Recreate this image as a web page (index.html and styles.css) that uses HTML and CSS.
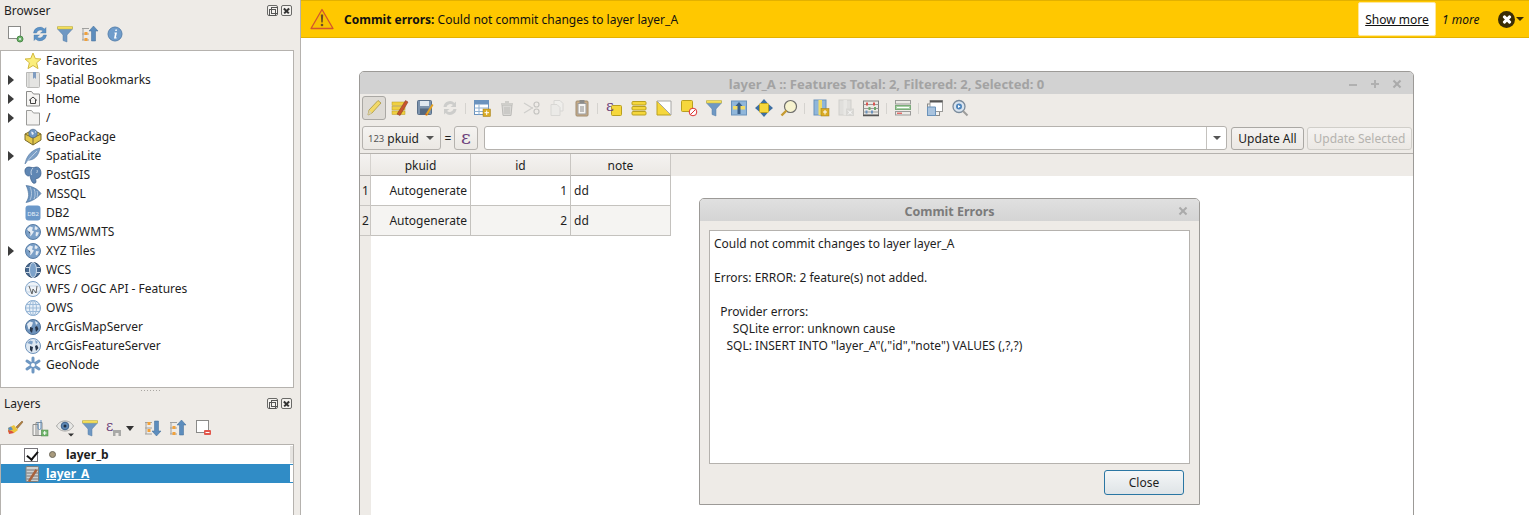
FILE: index.html
```html
<!DOCTYPE html>
<html lang="en">
<head>
<meta charset="utf-8">
<title>QGIS commit errors</title>
<link rel="stylesheet" href="styles.css">
</head>
<body>
<svg class="defs" width="0" height="0" aria-hidden="true">
  <defs>
    <symbol id="star" viewBox="0 0 18 18"><polygon points="9,1 11.3,6.6 17,7 12.6,10.8 14,16.6 9,13.5 4,16.6 5.4,10.8 1,7 6.7,6.6" fill="#fbee7c" stroke="#d2b93f"/></symbol>
    <symbol id="book" viewBox="0 0 18 18"><path d="M2.500 1.500h12a1 1 0 0 1 1 1v13a1 1 0 0 1-1 1H4a2 2 0 0 1-1.500-1z" fill="#e4e4e2" stroke="#b9b9b7"/><path d="M5 2v14" stroke="#c7c7c5"/><path d="M9 1h3v7l-1.500-1.500L9 8z" fill="#7f9cc0"/></symbol>
    <symbol id="home" viewBox="0 0 18 18"><path d="M2.500 1.500h5l2 2.500h6v12h-13z" fill="#f6f5f3" stroke="#8b8b89"/><path d="M5 10.500l4-3.500 4 3.500M6.500 9.500v4h5v-4" fill="none" stroke="#444"/></symbol>
    <symbol id="folder" viewBox="0 0 18 18"><path d="M2.500 1.500h5l2 2.500h6v12h-13z" fill="#f3f2f0" stroke="#9b9b99"/></symbol>
    <symbol id="gpkg" viewBox="0 0 18 18"><path d="M1 6l8-4 8 4v6l-8 5-8-5z" fill="#e3c84d" stroke="#7a6a2b"/><path d="M1 6l8 4 8-4M9 10v7" fill="none" stroke="#7a6a2b"/><circle cx="9" cy="5.500" r="4.300" fill="#6f96c2" stroke="#45648a" stroke-width=".6"/><path d="M7 3.500l2 .5 1 2-2 1zM11 3l1.500 1-1 1z" fill="#e8eef5"/></symbol>
    <symbol id="feather" viewBox="0 0 18 18"><path d="M1 17c1-6 5-14 15-16-1 6-4 11-10 12-2 .4-3 1-5 4z" fill="#7c9fc6" stroke="#52769f" stroke-width=".6"/><path d="M3 15c3-4 6-7 10-11" stroke="#dfe8f2" fill="none" stroke-width=".7"/></symbol>
    <symbol id="elephant" viewBox="0 0 18 18"><path d="M5 1c-3 0-4.500 2-4 5 .3 2.500 2 4 3.500 4 1 0 1-1 1.500 0 .6 2.500 1 5 3 7 1.500 .7 3 0 3-1 0-1.500-.5-2.500 0-3.500 2 .3 5-1.500 5-5C17 4 15.500 1 12.500 1c-1.500 0-2 .7-3.500.7C7.500 1.700 6.500 1 5 1z" fill="#5f86b3" stroke="#3c5f8a" stroke-width=".7"/><path d="M9 2c-2 2-2.500 4-1.500 7M13 4c.5 1 .5 2-.5 3" stroke="#dbe5f0" fill="none" stroke-width=".8"/></symbol>
    <symbol id="fin" viewBox="0 0 18 18"><path d="M2 .5c6 .5 12 3.500 15 8-3 4-9 8-15 9 2-3 3-6 2.500-9S3.500 3 2 .5z" fill="#6b93be" stroke="#4b7099" stroke-width=".6"/><path d="M6 2c2 4 2 9 0 13M10 4c1.500 3 1.500 7 0 10M13 6c.8 2 .8 4 0 6" stroke="#d3e0ee" fill="none" stroke-width=".7"/></symbol>
    <symbol id="db2" viewBox="0 0 18 18"><rect x=".5" y=".5" width="15" height="15" rx="3" fill="#6b98c9" transform="translate(1 1)"/><text x="9" y="11.500" text-anchor="middle" class="db2-label">DB2</text></symbol>
    <symbol id="globe" viewBox="0 0 18 18"><circle cx="9" cy="9" r="7.500" fill="#7ba0c8" stroke="#587da6"/><path d="M3 6l3-2.500 3 1-1 3 2 1-2 3-1.500 2-1-3.500zM11 3l3 2-1.500 2-2-.5zM12 9l3 .5-2 4-1.500-1z" fill="#e5ecf4"/><path d="M4 8l2 1 .5 3z" fill="#37506f"/></symbol>
    <symbol id="wcs" viewBox="0 0 18 18"><circle cx="9" cy="9" r="7.500" fill="#46688f" stroke="#2f4b6d"/><path d="M2 6.500h14M1.500 11.500h15" stroke="#cfdcea" stroke-width="1.200"/><ellipse cx="9" cy="9" rx="3.500" ry="7.500" fill="#7da2c9" stroke="#cfdcea"/></symbol>
    <symbol id="wfs" viewBox="0 0 18 18"><circle cx="9" cy="9" r="7.500" fill="#eef3f8" stroke="#7b9fc6"/><path d="M2 6h14M2 12h14" stroke="#c3d4e6"/><path d="M5 6l3 8 1-5 3 4 1-7" fill="none" stroke="#555" stroke-width=".9"/></symbol>
    <symbol id="ows" viewBox="0 0 18 18"><circle cx="9" cy="9" r="7.500" fill="#e8f0f8" stroke="#7ca2ca"/><ellipse cx="9" cy="9" rx="3.500" ry="7.500" fill="none" stroke="#9dbbd9"/><path d="M1.500 9h15M2.500 5.500h13M2.500 12.500h13M9 1.500v15" stroke="#9dbbd9"/></symbol>
    <symbol id="arcmap" viewBox="0 0 18 18"><circle cx="9" cy="9" r="7.500" fill="#6f94bd" stroke="#4f7299"/><path d="M3 6l3-2.500 3 1-1 3-2 3-1.500 1zM11 3l3 2-2 2z" fill="#e5ecf4"/><path d="M6 9l3 1-1 5-2-2zM11 9l2-1 1.500 3-2.500 3z" fill="#27354a"/></symbol>
    <symbol id="arcfeat" viewBox="0 0 18 18"><circle cx="9" cy="9" r="7.500" fill="#dde7f1" stroke="#6f94bd"/><path d="M3 6l3-2.500 3 1-1 3zM11 3l3 2-2 2z" fill="#7da0c6"/><path d="M6 9l3 1-1 5-2-2zM11 9l2-1 1.500 3-2.500 3z" fill="#27354a"/></symbol>
    <symbol id="geonode" viewBox="0 0 18 18"><g stroke="#6e97c2" stroke-width="3" stroke-linecap="round"><path d="M9 2v14M3 5l12 8M15 5L3 13"/></g><circle cx="9" cy="9" r="2" fill="#fff"/></symbol>

    <symbol id="new-conn" viewBox="0 0 18 18"><rect x="2.500" y="1.500" width="12" height="12" fill="#fff" stroke="#8a8a88"/><circle cx="14" cy="14" r="3" fill="#6fb46a" stroke="#4b8a4a"/><circle cx="14" cy="14" r="1" fill="#eef"/></symbol>
    <symbol id="refresh" viewBox="0 0 18 18"><path d="M2.500 8a6.500 6.500 0 0 1 11-4l1.500-1.500V8h-5.500L12 6a4 4 0 0 0-6.500 2z" fill="#5d93c7" stroke="#4373a3" stroke-width=".4"/><path d="M15.500 10a6.500 6.500 0 0 1-11 4L3 15.500V10h5.500L6 12a4 4 0 0 0 6.500-2z" fill="#5d93c7" stroke="#4373a3" stroke-width=".4"/></symbol>
    <symbol id="refresh-off" viewBox="0 0 18 18"><path d="M2.500 8a6.500 6.500 0 0 1 11-4l1.500-1.500V8h-5.500L12 6a4 4 0 0 0-6.500 2z" fill="#cdcdcb"/><path d="M15.500 10a6.500 6.500 0 0 1-11 4L3 15.500V10h5.500L6 12a4 4 0 0 0 6.500-2z" fill="#cdcdcb"/></symbol>
    <symbol id="filter" viewBox="0 0 18 18"><path d="M1.500 2h15v2l-5.500 6v7l-4-1.500V10L1.500 4z" fill="#6f98c3" stroke="#557da7" stroke-width=".5"/><path d="M1.500 1.500h15V4h-15z" fill="#f4df5c" stroke="#c9b53f" stroke-width=".5"/></symbol>
    <symbol id="collapse" viewBox="0 0 18 18"><path d="M1 3.500h7M1 9h7M1 15h7M2 3v12" stroke="#a0a09e" fill="none"/><rect x="3.500" y="7" width="3" height="3" fill="#f2a13a"/><rect x="3.500" y="13" width="3" height="3" fill="#f2a13a"/><path d="M12.500 1l4.500 5h-2.500v10h-4V6H8z" fill="#5d8dbd" stroke="#3f6a96" stroke-width=".5"/></symbol>
    <symbol id="expand" viewBox="0 0 18 18"><path d="M1 3.500h7M1 9h7M1 15h7M2 3v12" stroke="#a0a09e" fill="none"/><rect x="3.500" y="3" width="3" height="3" fill="#f2a13a"/><rect x="3.500" y="10" width="3" height="3" fill="#f2a13a"/><path d="M12.500 17l4.500-5h-2.500V2h-4v10H8z" fill="#5d8dbd" stroke="#3f6a96" stroke-width=".5"/></symbol>
    <symbol id="info" viewBox="0 0 18 18"><circle cx="9" cy="9" r="7" fill="#6f9ccb" stroke="#5882ad"/><path d="M9.500 4.500h1.500l-.3 1.500H9.200zM8.500 7.500H11L9.800 12.500h1l-.3 1H8l1-5H8.300z" fill="#fff"/></symbol>

    <symbol id="style" viewBox="0 0 18 18"><path d="M2 9l6-3 4 5-4 3-6-1z" fill="#ecc53c"/><path d="M2 11l4 1 2 2-5 1z" fill="#d9503f"/><path d="M2 9l3-1.500 2 3-4 1z" fill="#5f8ec0"/><path d="M10 8l6-6 1 1-5.500 6.500z" fill="#b1803f" stroke="#80592a" stroke-width=".5"/></symbol>
    <symbol id="add-group" viewBox="0 0 18 18"><path d="M2 5.500h5v11H2zM5 3.500h6v13H5z" fill="#f3f2f0" stroke="#8b8b89"/><path d="M7 3V9a1.500 1.500 0 0 0 3 0V1" fill="none" stroke="#5d8dbd"/><rect x="10.500" y="11" width="6.500" height="6" fill="#6fb46a" stroke="#4b8a4a" stroke-width=".5"/><path d="M13.700 12v4M12 14h3.500" stroke="#fff"/></symbol>
    <symbol id="eye" viewBox="0 0 18 18"><path d="M.5 7C3 3 6 2 9 2s6 1 8.500 5C15 11 12 12 9 12s-6-1-8.500-5z" fill="#e8e8e6" stroke="#a6a6a4"/><circle cx="9" cy="7" r="3.800" fill="#5e88b5" stroke="#3d618a"/><circle cx="9" cy="7" r="1.500" fill="#1f2f44"/><path d="M12 14.500h6l-3 3z" fill="#333"/></symbol>
    <symbol id="expr-tbl" viewBox="0 0 18 18"><text x="0" y="12" class="eps-small">&#949;</text><path d="M7 11h8v6h-2.500v-3h-3v3H7z" fill="#a9a9a7"/></symbol>
    <symbol id="remove-lyr" viewBox="0 0 18 18"><rect x="2.500" y="1.500" width="12" height="12" fill="#fff" stroke="#8a8a88"/><rect x="10" y="11" width="7" height="5" rx="1" fill="#e2574c"/><path d="M11.500 13.500h4" stroke="#fff"/></symbol>
    <symbol id="edit-lyr" viewBox="0 0 18 18"><rect x="2" y="1.500" width="12.500" height="15" rx="1" fill="#cfd0ce" stroke="#7d7d7b"/><path d="M2.500 5h11.500M2.500 8h11.500M2.500 11h11.500M2.500 14h11.500" stroke="#76777a"/><path d="M4 15.500L11.500 4l2 1.500L6 17z" fill="#a8623c"/></symbol>

    <symbol id="pencil" viewBox="0 0 18 18"><path d="M3 16l1-5L13 1.500 16 4 7 14z" fill="#f2d968" stroke="#a08c35" stroke-width=".7"/><path d="M3 16l1-5 3 3z" fill="#d8d0b0"/></symbol>
    <symbol id="multi-edit" viewBox="0 0 18 18"><rect x="1" y="3" width="13" height="3.500" fill="#f0d040" stroke="#b59a25" stroke-width=".5"/><rect x="1" y="7.500" width="13" height="3.500" fill="#f0d040" stroke="#b59a25" stroke-width=".5"/><rect x="1" y="12" width="13" height="3.500" fill="#f0d040" stroke="#b59a25" stroke-width=".5"/><path d="M6 15L14.500 1.500l2.500 1.500-8 13.500z" fill="#c7552e" stroke="#7d3a1f" stroke-width=".5"/></symbol>
    <symbol id="save-edit" viewBox="0 0 18 18"><rect x="1.500" y="1.500" width="14" height="14" rx="1" fill="#7c93ad" stroke="#5a708a"/><rect x="4" y="2" width="9" height="5" fill="#dfe7ef"/><rect x="4" y="9.500" width="9" height="6" fill="#55687f"/><path d="M9 16L16 5l1.500 1-6.500 11z" fill="#e6a21f"/><path d="M9 16l1-1.500 1.500 1z" fill="#c7452e"/></symbol>
    <symbol id="new-field" viewBox="0 0 18 18"><rect x="1.500" y="1.500" width="14" height="14" fill="#fff" stroke="#6b93be"/><rect x="1.500" y="1.500" width="14" height="4" fill="#6b93be"/><path d="M1.500 9h14M1.500 12.500h14M6 5.500v10" stroke="#8fb0d0"/><rect x="10" y="10" width="7.500" height="7.500" fill="#d9ab25" stroke="#a07d18" stroke-width=".5"/><path d="M13.700 11.500v4.500M11.500 13.700H16" stroke="#fff"/></symbol>
    <symbol id="trash" viewBox="0 0 18 18"><path d="M4 6h10l-1 10.500H5z" fill="#d9d8d5" stroke="#bcbbb8"/><path d="M3 4h12v2H3zM7 2h4v2H7z" fill="#cfceca"/><path d="M7 8v7M9 8v7M11 8v7" stroke="#bcbbb8"/></symbol>
    <symbol id="cut" viewBox="0 0 18 18"><path d="M1 4l9 5.500M1 14l9-5.500" stroke="#cfcecb" stroke-width="1.200"/><circle cx="13.500" cy="5.500" r="2.500" fill="none" stroke="#c5c4c1" stroke-width="1.200"/><circle cx="13.500" cy="12.500" r="2.500" fill="none" stroke="#c5c4c1" stroke-width="1.200"/></symbol>
    <symbol id="copy" viewBox="0 0 18 18"><path d="M6 1.500h6l3 3V12H6z" fill="#efeeeb" stroke="#d8d7d4"/><path d="M3 5.500h6l3 3v8H3z" fill="#ebeae7" stroke="#d8d7d4"/></symbol>
    <symbol id="paste" viewBox="0 0 18 18"><rect x="3" y="2" width="12" height="15" rx="1" fill="#c9ad88" stroke="#a08c70"/><rect x="5" y="4.500" width="8" height="10.500" fill="#f6f5f3" stroke="#999"/><rect x="6.500" y="1" width="5" height="3" fill="#8b8b89"/><path d="M7 8h4M7 10h4M7 12h4" stroke="#888"/></symbol>
    <symbol id="sel-expr" viewBox="0 0 18 18"><rect x="6.500" y="6.500" width="10" height="10" rx="1" fill="#f6d73c" stroke="#b9a021"/><text x="1" y="11.500" class="eps-big">&#949;</text></symbol>
    <symbol id="sel-all" viewBox="0 0 18 18"><rect x="2" y="2.500" width="14" height="3.500" rx="1" fill="#f6d73c" stroke="#b9a021"/><rect x="2" y="7.500" width="14" height="3.500" rx="1" fill="#f6d73c" stroke="#b9a021"/><rect x="2" y="12.500" width="14" height="3.500" rx="1" fill="#f6d73c" stroke="#b9a021"/></symbol>
    <symbol id="sel-inv" viewBox="0 0 18 18"><path d="M2 2v14h14z" fill="#f6d73c" stroke="#b9a021"/><path d="M2 2h14v14z" fill="#fff" stroke="#a6a6a4"/></symbol>
    <symbol id="desel" viewBox="0 0 18 18"><rect x="1.500" y="1.500" width="11" height="11" rx="1" fill="#f6d73c" stroke="#b9a021"/><circle cx="13" cy="13" r="3.800" fill="#fff" stroke="#d33"/><path d="M10.500 15.500l5-5" stroke="#d33"/></symbol>
    <symbol id="move-top" viewBox="0 0 18 18"><rect x="1.500" y="2" width="15" height="14" fill="#8fb6da" stroke="#6a93bb"/><rect x="3" y="7" width="12" height="3.500" fill="#f1dc66"/><path d="M9 3l3.500 4h-2v8h-3V7h-2z" fill="#3a5f88"/></symbol>
    <symbol id="pan" viewBox="0 0 18 18"><path d="M9 0l3.500 4h-7zM9 18l-3.500-4h7zM0 9l4-3.500v7zM18 9l-4 3.500v-7z" fill="#3e6fa3"/><rect x="4.500" y="4.500" width="9" height="9" rx="1" fill="#f6d73c" stroke="#b9a021"/></symbol>
    <symbol id="zoom" viewBox="0 0 18 18"><circle cx="10.500" cy="7.500" r="6" fill="#f7f3cf" stroke="#6d6d6b" stroke-width="1.200"/><path d="M1.500 16.500l5-5" stroke="#c69b32" stroke-width="2.400"/></symbol>
    <symbol id="col-add" viewBox="0 0 18 18"><rect x="2" y="1" width="12" height="15" fill="#8fb6da" stroke="#6a93bb"/><rect x="6.500" y="1" width="3.500" height="15" fill="#f1dc66"/><rect x="9" y="9.500" width="8" height="7.500" fill="#d9ab25" stroke="#a07d18" stroke-width=".5"/><path d="M13 11v4.500M11 13h4" stroke="#fff"/></symbol>
    <symbol id="col-del" viewBox="0 0 18 18"><rect x="2" y="1" width="12" height="15" fill="#e0dfdc" stroke="#d0cfcc"/><rect x="6.500" y="1" width="3.500" height="15" fill="#e8e7e4"/><rect x="9" y="9.500" width="8" height="7.500" fill="#d8d7d4"/><path d="M11 11.500l4 4M15 11.500l-4 4" stroke="#fff"/></symbol>
    <symbol id="abacus" viewBox="0 0 18 18"><rect x="1.500" y="2" width="15" height="14" fill="#eceae6" stroke="#7f7f7d"/><path d="M1 16.500h16" stroke="#555" stroke-width="1.500"/><path d="M1.500 5.500h15M1.500 9.500h15M1.500 13h15" stroke="#999"/><path d="M4 3.500h2v3H4zM11 3.500h2v3h-2z" fill="#d9534f"/><path d="M6.500 8h2v3h-2zM12 8h2v3h-2z" fill="#6fa66a"/><path d="M3.500 11.500h2v3h-2zM9 11.500h2v3H9z" fill="#6b93be"/></symbol>
    <symbol id="cond" viewBox="0 0 18 18"><rect x="1.500" y="1.500" width="15" height="3.500" fill="#eceae6" stroke="#9b9b99"/><rect x="1.500" y="6.500" width="15" height="4" fill="#a8d0a6" stroke="#7bab7a"/><rect x="1.500" y="12.500" width="15" height="3.500" fill="#eceae6" stroke="#9b9b99"/><path d="M3 8.500h12" stroke="#fff"/><path d="M3 14.200h5" stroke="#d33"/></symbol>
    <symbol id="dock" viewBox="0 0 18 18"><rect x="1.500" y="5" width="12" height="11.500" fill="#f3f2f0" stroke="#8b8b89"/><rect x="4" y="1.500" width="12.500" height="11" fill="#fff" stroke="#9b9b99"/><rect x="4" y="1.500" width="12.500" height="2" fill="#555"/><path d="M1.500 8h8v8.500h-8z" fill="#a9c3de" stroke="#6a93bb"/></symbol>
    <symbol id="actions" viewBox="0 0 18 18"><circle cx="8" cy="7.500" r="6" fill="#d9e4ef" stroke="#7a8b9c" stroke-width="1.300"/><circle cx="8" cy="7.500" r="3" fill="#4f86bd"/><path d="M7 6l2.500 1.500L7 9z" fill="#fff"/><path d="M12 12l4.500 4.500" stroke="#9d9d9b" stroke-width="2"/></symbol>

    <symbol id="warn" viewBox="0 0 24 22"><path d="M12 1.500L23 20.500H1z" fill="#f7c200" stroke="#d4562c" stroke-width="1.300" stroke-linejoin="round"/><path d="M10.800 6.500h2.400l-.5 8h-1.400z" fill="#6e4d22"/><circle cx="12" cy="17" r="1.300" fill="#6e4d22"/></symbol>
  </defs>
</svg>

<div class="app">
  <aside class="docks">
    <section class="dock dock-browser">
      <header class="dock-title">
        <span>Browser</span>
        <span class="dock-btns"><span class="dock-btn dock-float"></span><span class="dock-btn dock-close"></span></span>
      </header>
      <div class="dock-tools">
        <svg class="ti"><use href="#new-conn"/></svg>
        <svg class="ti"><use href="#refresh"/></svg>
        <svg class="ti"><use href="#filter"/></svg>
        <svg class="ti"><use href="#collapse"/></svg>
        <svg class="ti"><use href="#info"/></svg>
      </div>
      <ul class="tree tree-browser">
        <li class="row"><span class="arrow none"></span><svg class="ri"><use href="#star"/></svg>Favorites</li>
        <li class="row"><span class="arrow"></span><svg class="ri"><use href="#book"/></svg>Spatial Bookmarks</li>
        <li class="row"><span class="arrow"></span><svg class="ri"><use href="#home"/></svg>Home</li>
        <li class="row"><span class="arrow"></span><svg class="ri"><use href="#folder"/></svg>/</li>
        <li class="row"><span class="arrow none"></span><svg class="ri"><use href="#gpkg"/></svg>GeoPackage</li>
        <li class="row"><span class="arrow"></span><svg class="ri"><use href="#feather"/></svg>SpatiaLite</li>
        <li class="row"><span class="arrow none"></span><svg class="ri"><use href="#elephant"/></svg>PostGIS</li>
        <li class="row"><span class="arrow none"></span><svg class="ri"><use href="#fin"/></svg>MSSQL</li>
        <li class="row"><span class="arrow none"></span><svg class="ri"><use href="#db2"/></svg>DB2</li>
        <li class="row"><span class="arrow none"></span><svg class="ri"><use href="#globe"/></svg>WMS/WMTS</li>
        <li class="row"><span class="arrow"></span><svg class="ri"><use href="#globe"/></svg>XYZ Tiles</li>
        <li class="row"><span class="arrow none"></span><svg class="ri"><use href="#wcs"/></svg>WCS</li>
        <li class="row"><span class="arrow none"></span><svg class="ri"><use href="#wfs"/></svg>WFS / OGC API - Features</li>
        <li class="row"><span class="arrow none"></span><svg class="ri"><use href="#ows"/></svg>OWS</li>
        <li class="row"><span class="arrow none"></span><svg class="ri"><use href="#arcmap"/></svg>ArcGisMapServer</li>
        <li class="row"><span class="arrow none"></span><svg class="ri"><use href="#arcfeat"/></svg>ArcGisFeatureServer</li>
        <li class="row"><span class="arrow none"></span><svg class="ri"><use href="#geonode"/></svg>GeoNode</li>
      </ul>
    </section>
    <div class="dock-grip"></div>
    <section class="dock dock-layers">
      <header class="dock-title">
        <span>Layers</span>
        <span class="dock-btns"><span class="dock-btn dock-float"></span><span class="dock-btn dock-close"></span></span>
      </header>
      <div class="dock-tools">
        <svg class="ti"><use href="#style"/></svg>
        <svg class="ti"><use href="#add-group"/></svg>
        <svg class="ti"><use href="#eye"/></svg>
        <svg class="ti"><use href="#filter"/></svg>
        <span class="ti-expr"><svg class="ti-inner"><use href="#expr-tbl"/></svg><span class="caret-dark"></span></span>
        <svg class="ti"><use href="#expand"/></svg>
        <svg class="ti"><use href="#collapse"/></svg>
        <svg class="ti"><use href="#remove-lyr"/></svg>
      </div>
      <ul class="tree tree-layers">
        <li class="row layer-b"><span class="check"></span><span class="dot"></span><b>layer_b</b><span class="edge"></span></li>
        <li class="row layer-a"><svg class="ri"><use href="#edit-lyr"/></svg><b>layer_A</b><span class="edge"></span></li>
      </ul>
    </section>
  </aside>

  <main class="canvas">
    <div class="msgbar">
      <svg class="warn"><use href="#warn"/></svg>
      <span class="msg"><b>Commit errors:</b> Could not commit changes to layer layer_A</span>
      <a class="show-more">Show more</a>
      <i class="more">1 more</i>
      <span class="msg-close"></span>
      <span class="msg-caret"></span>
    </div>

    <div class="win attr">
      <div class="titlebar attr-title">
        <span class="t-text">layer_A :: Features Total: 2, Filtered: 2, Selected: 0</span>
        <span class="wm"><span class="wm-min"></span><span class="wm-max"></span><span class="wm-x"></span></span>
      </div>
      <div class="attr-tools">
        <span class="tb active"><svg class="ti"><use href="#pencil"/></svg></span>
        <span class="tb"><svg class="ti"><use href="#multi-edit"/></svg></span>
        <span class="tb"><svg class="ti"><use href="#save-edit"/></svg></span>
        <span class="tb"><svg class="ti"><use href="#refresh-off"/></svg></span>
        <span class="sep"></span>
        <span class="tb"><svg class="ti"><use href="#new-field"/></svg></span>
        <span class="tb"><svg class="ti"><use href="#trash"/></svg></span>
        <span class="tb"><svg class="ti"><use href="#cut"/></svg></span>
        <span class="tb"><svg class="ti"><use href="#copy"/></svg></span>
        <span class="tb"><svg class="ti"><use href="#paste"/></svg></span>
        <span class="sep"></span>
        <span class="tb"><svg class="ti"><use href="#sel-expr"/></svg></span>
        <span class="tb"><svg class="ti"><use href="#sel-all"/></svg></span>
        <span class="tb"><svg class="ti"><use href="#sel-inv"/></svg></span>
        <span class="tb"><svg class="ti"><use href="#desel"/></svg></span>
        <span class="tb"><svg class="ti"><use href="#filter"/></svg></span>
        <span class="tb"><svg class="ti"><use href="#move-top"/></svg></span>
        <span class="tb"><svg class="ti"><use href="#pan"/></svg></span>
        <span class="tb"><svg class="ti"><use href="#zoom"/></svg></span>
        <span class="sep"></span>
        <span class="tb"><svg class="ti"><use href="#col-add"/></svg></span>
        <span class="tb"><svg class="ti"><use href="#col-del"/></svg></span>
        <span class="tb"><svg class="ti"><use href="#abacus"/></svg></span>
        <span class="sep"></span>
        <span class="tb"><svg class="ti"><use href="#cond"/></svg></span>
        <span class="sep"></span>
        <span class="tb"><svg class="ti"><use href="#dock"/></svg></span>
        <span class="tb"><svg class="ti"><use href="#actions"/></svg></span>
      </div>
      <div class="filter-row">
        <span class="combo"><small>123</small> pkuid<span class="caret"></span></span>
        <span class="eq">=</span>
        <span class="eps-btn">&#949;</span>
        <span class="expr-input"><span class="expr-drop"><span class="caret"></span></span></span>
        <span class="btn">Update All</span>
        <span class="btn off">Update Selected</span>
      </div>
      <div class="table">
        <div class="thead">
          <span class="corner"></span>
          <span class="th c1">pkuid</span>
          <span class="th c2">id</span>
          <span class="th c3">note</span>
        </div>
        <div class="tr">
          <span class="rh">1</span>
          <span class="td c1 right">Autogenerate</span>
          <span class="td c2 right">1</span>
          <span class="td c3">dd</span>
        </div>
        <div class="tr alt">
          <span class="rh">2</span>
          <span class="td c1 right">Autogenerate</span>
          <span class="td c2 right">2</span>
          <span class="td c3">dd</span>
        </div>
        <div class="rh-rest"></div>
      </div>
    </div>

    <div class="win dialog">
      <div class="titlebar dlg-title">
        <span class="t-text">Commit Errors</span>
        <span class="wm"><span class="wm-x"></span></span>
      </div>
      <div class="dlg-body">
        <pre class="dlg-text">Could not commit changes to layer layer_A

Errors: ERROR: 2 feature(s) not added.

  Provider errors:
      SQLite error: unknown cause
    SQL: INSERT INTO "layer_A"(,"id","note") VALUES (,?,?)</pre>
        <div class="dlg-foot"><span class="close-btn">Close</span></div>
      </div>
    </div>
  </main>
</div>
</body>
</html>
```

FILE: styles.css
```css
* { box-sizing: border-box; }
html, body { margin: 0; height: 515px; overflow: hidden; }
body {
  background: #fff;
  color: #1e1e1e;
  font-family: "Noto Sans", "Open Sans", sans-serif;
  font-size: 12px;
  line-height: 17px;
}
.defs { display: block; height: 0; }
.db2-label { font: 6px "Noto Sans", sans-serif; fill: #e8f0f8; }
.eps-small { font: 14px "DejaVu Serif", serif; fill: #6b3f7a; }
.eps-big { font: 15px "DejaVu Serif", serif; fill: #6b3f7a; }

.app { display: flex; height: 515px; }

/* left docks */
.docks {
  width: 301px;
  flex: none;
  background: #eeebe7;
  display: flex;
  flex-direction: column;
  border-right: 1px solid #b5b2ae;
}
.dock { display: flex; flex-direction: column; }
.dock-browser { height: 388px; }
.dock-layers { flex: 1; min-height: 0; }
.dock-grip { height: 5px; margin: 0 auto; width: 20px; background: radial-gradient(circle, #a9a6a2 .6px, transparent 1px) 0 0 / 3px 5px repeat-x; flex: none; }
.dock-title {
  height: 20px;
  padding: 1px 8px 0 4px;
  display: flex;
  align-items: center;
  justify-content: space-between;
  flex: none;
}
.dock-btns { display: flex; gap: 3px; }
.dock-btn { width: 11px; height: 11px; border: 1px solid #6a6a68; border-radius: 2px; position: relative; background: #f4f2ef; }
.dock-float::before { content: ""; display: block; width: 5px; height: 5px; margin: 3px 0 0 1px; border: 1px solid #555; }
.dock-float::after { content: ""; position: absolute; top: 1px; left: 3px; width: 5px; height: 5px; border: 1px solid #555; }
.dock-close::before, .dock-close::after { content: ""; position: absolute; left: 1px; top: 4px; width: 7px; height: 1.500px; background: #333; transform: rotate(45deg); }
.dock-close::after { transform: rotate(-45deg); }
.dock-tools {
  height: 30px;
  flex: none;
  padding: 0 0 3px 6px;
  display: flex;
  align-items: center;
  gap: 7px;
}
.dock-layers .dock-tools { height: 31px; padding-bottom: 1px; }
.ti { width: 18px; height: 18px; flex: none; display: block; }
.ti-expr { display: flex; align-items: center; width: 31px; gap: 2px; flex: none; }
.ti-inner { width: 18px; height: 18px; flex: none; display: block; }
.caret-dark { width: 0; height: 0; border: 4px solid transparent; border-top: 5px solid #333; border-bottom: 0; }

.tree {
  list-style: none;
  margin: 0 6px 0 0;
  padding: 0;
  background: #fff;
  border: 1px solid #b5b2ae;
  flex: 1;
  min-height: 0;
}
.row { height: 19px; display: flex; align-items: center; white-space: nowrap; position: relative; }
.arrow { width: 0; height: 0; margin-left: 7px; border-left: 6px solid #3c3c3c; border-top: 5px solid transparent; border-bottom: 5px solid transparent; margin-right: 10px; }
.arrow.none { border-left-color: transparent; }
.ri { width: 18px; height: 18px; margin-right: 4px; flex: none; display: block; }
.tree-layers { border-bottom: 0; }
.check { width: 14px; height: 14px; margin-left: 23px; background: #fff; border: 1px solid #77757a; position: relative; }
.check::after { content: ""; position: absolute; left: 3.500px; top: 0; width: 5px; height: 9px; border: solid #111; border-width: 0 2px 2px 0; transform: rotate(40deg); }
.dot { width: 7px; height: 7px; border-radius: 50%; background: #a89a7d; border: 1px solid #6e6a5c; margin: 0 10px 0 11px; }
.layer-a { background: #308cc6; color: #fff; padding-left: 23px; }
.layer-a b { text-decoration: underline; font-weight: 700; }
.edge { position: absolute; right: 0; top: 1px; bottom: 1px; width: 3px; background: #e6e4e1; }
.layer-a .edge { background: #fff; }

/* canvas */
.canvas { flex: 1; position: relative; min-width: 0; overflow: hidden; }
.msgbar {
  height: 38px;
  background: #ffc800;
  border-top: 1px solid #e3b100;
  border-bottom: 1px solid #e3b100;
  display: flex;
  align-items: center;
  padding: 0 2px 0 9px;
  color: #111;
}
.warn { width: 24px; height: 22px; flex: none; margin-right: 10px; display: block; }
.msg { flex: 1; }
.show-more {
  width: 78px;
  height: 34px;
  background: #fff;
  border: 1px solid #ffe79a;
  border-radius: 2px;
  text-align: center;
  line-height: 33px;
  text-decoration: underline;
  color: #111;
}
.more { width: 50px; margin-left: 6px; flex: none; }
.msg-close { width: 17px; height: 17px; border-radius: 50%; background: #3a2c05; position: relative; margin-left: 6px; flex: none; }
.msg-close::before, .msg-close::after { content: ""; position: absolute; left: 3.500px; top: 7px; width: 10px; height: 3px; background: #fff; border-radius: 1px; transform: rotate(45deg); }
.msg-close::after { transform: rotate(-45deg); }
.msg-caret { width: 0; height: 0; border: 4px solid transparent; border-top: 4px solid #3a2c05; border-bottom: 0; margin: 0 3px 0 1px; flex: none; }

/* windows on the desktop */
.win { position: absolute; background: #eeebe7; border: 1px solid #9c9a97; }
.attr { left: 58px; top: 71px; width: 1055px; height: 480px; border-radius: 5px 5px 0 0; }
.dialog { left: 398px; top: 198px; width: 501px; height: 307px; border-radius: 5px 5px 0 0; display: flex; flex-direction: column; }
.titlebar { display: flex; align-items: center; justify-content: center; position: relative; font-weight: 700; font-size: 13px; flex: none; }
.attr-title { height: 22px; background: #d2d2d2; color: #a3a3a3; border-radius: 4px 4px 0 0; padding-top: 2px; }
.dlg-title { height: 22px; background: linear-gradient(#e0e0e0, #d4d4d4); color: #7b7b7b; border-radius: 4px 4px 0 0; padding-top: 2px; font-size: 12.500px; }
.wm { position: absolute; right: 10px; top: 5px; display: flex; gap: 10px; align-items: center; height: 13px; }
.wm span { display: block; width: 12px; height: 12px; position: relative; }
.wm-min::before { content: ""; position: absolute; left: 2px; right: 2px; top: 6px; height: 2px; background: #b0b0b0; }
.wm-max::before, .wm-max::after { content: ""; position: absolute; left: 2px; right: 2px; top: 5px; height: 2px; background: #b0b0b0; }
.wm-max::after { transform: rotate(90deg); }
.wm-x::before, .wm-x::after { content: ""; position: absolute; left: 1px; right: 1px; top: 5px; height: 2px; background: #aaa; transform: rotate(45deg); }
.wm-x::after { transform: rotate(-45deg); }

.attr-tools { height: 30px; display: flex; align-items: center; padding: 0 0 2px 2px; }
.tb { width: 25px; height: 24px; display: flex; align-items: center; justify-content: center; flex: none; border: 1px solid transparent; border-radius: 3px; }
.tb.active { background: #dedbd6; border-color: #aaa8a4; width: 24px; margin-right: 1px; }
.sep { width: 7px; flex: none; display: flex; justify-content: center; }
.sep::before { content: ""; width: 1px; height: 11px; background: #d5d3cf; }

.filter-row { height: 24px; display: flex; align-items: center; padding: 0 0 0 2px; margin-top: 2px; }
.combo { width: 79px; height: 24px; background: linear-gradient(#f5f3f1, #ebe8e4); border: 1px solid #b5b2ae; border-radius: 3px; display: flex; align-items: center; padding-left: 5px; gap: 3px; position: relative; flex: none; }
.combo small { font-size: 9.500px; color: #555; }
.caret { width: 0; height: 0; border: 4px solid transparent; border-top: 4px solid #555; border-bottom: 0; display: block; }
.combo .caret { position: absolute; right: 6px; top: 9px; }
.eq { width: 12px; text-align: center; margin-left: 1px; flex: none; }
.eps-btn { width: 24px; height: 24px; border: 1px solid #b5b2ae; border-radius: 3px; background: linear-gradient(#f5f3f1, #ebe8e4); text-align: center; line-height: 21px; font-size: 19px; color: #6b3f7a; font-family: "DejaVu Serif", serif; flex: none; }
.expr-input { width: 743px; height: 24px; margin-left: 6px; background: #fff; border: 1px solid #b5b2ae; border-radius: 3px; display: flex; justify-content: flex-end; flex: none; }
.expr-drop { width: 20px; border-left: 1px solid #c4c2be; display: flex; align-items: center; justify-content: center; }
.btn { height: 23px; border: 1px solid #aaa8a4; border-radius: 3px; background: linear-gradient(#f5f3f1, #ebe8e4); display: flex; align-items: center; justify-content: center; flex: none; margin-left: 4px; white-space: nowrap; }
.btn:not(.off) { width: 73px; }
.btn.off { width: 105px; margin-left: 3px; color: #b5b3af; border-color: #d0cec9; }

.table { margin-top: 3px; border-top: 1px solid #b5b2ae; background: #fff; height: 400px; }
.thead { height: 22px; display: flex; background: #eeebe7; }
.corner { width: 11px; flex: none; border-right: 1px solid #d5d2ce; background: linear-gradient(#f5f3f1, #ebe8e4); border-bottom: 1px solid #b5b2ae; }
.th { display: flex; align-items: center; justify-content: center; padding-top: 2px; background: linear-gradient(#f5f3f1, #ebe8e4); border-bottom: 1px solid #b5b2ae; border-right: 1px solid #c9c6c2; flex: none; }
.c1 { width: 100px; }
.c2 { width: 100px; }
.c3 { width: 100px; }
.tr { height: 30px; display: flex; }
.tr.alt .td { background: #f5f4f2; }
.rh { width: 11px; flex: none; background: #eeebe7; border-right: 1px solid #c9c6c2; border-bottom: 1px solid #c9c6c2; padding-left: 2px; display: flex; align-items: center; }
.td { border-right: 1px solid #c4c2be; border-bottom: 1px solid #c4c2be; padding: 0 3px; display: flex; align-items: center; flex: none; }
.td.right { justify-content: flex-end; }
.rh-rest { width: 11px; height: 340px; background: #eeebe7; }

.dlg-body { flex: 1; min-height: 0; display: flex; flex-direction: column; padding: 9px; }
.dlg-text { margin: 0; height: 234px; background: #fff; border: 1px solid #b5b2ae; padding: 4px; font: inherit; line-height: 17px; white-space: pre; flex: none; }
.dlg-foot { display: flex; justify-content: flex-end; padding: 6px 6px 0 0; }
.close-btn { width: 80px; height: 25px; border: 1px solid #2a76a3; border-radius: 3px; background: linear-gradient(#f4f6f7, #dfe4e7); display: flex; align-items: center; justify-content: center; }
```
